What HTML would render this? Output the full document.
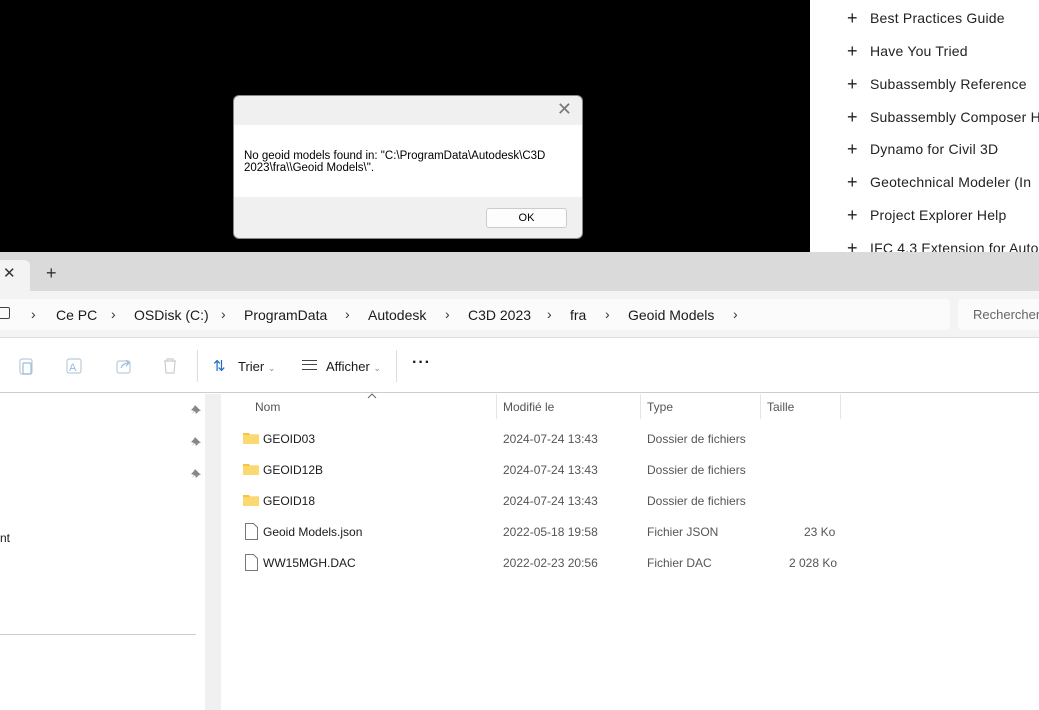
<!DOCTYPE html>
<html><head><style>
*{margin:0;padding:0;box-sizing:border-box}
body{width:1039px;height:710px;overflow:hidden;position:relative;background:#fff;font-family:"Liberation Sans",sans-serif;font-size:12px;color:#1a1a1a}
.abs{position:absolute}
.help div{position:absolute;left:60px;font-size:14px;color:#222;white-space:nowrap;letter-spacing:.2px}
.help span{position:absolute;left:-23px;top:-2px;font-size:18px;color:#222}
.crumb{position:absolute;top:307px;font-size:14px;color:#1a1a1a;white-space:nowrap}
.chev{position:absolute;top:306px;font-size:14px;color:#333}
.row{position:absolute;left:0;width:1039px;height:31px;font-size:12px}
.row span{position:absolute;top:9px;white-space:nowrap}
.pin{position:absolute;left:190px}
</style></head><body>
<div class="abs" style="left:0;top:0;width:810px;height:252px;background:#000"></div>
<div class="abs help" style="left:810px;top:0;width:229px;height:252px;background:#fff;overflow:hidden">
<div style="top:10px"><span>+</span>Best Practices Guide</div>
<div style="top:43px"><span>+</span>Have You Tried</div>
<div style="top:76px"><span>+</span>Subassembly Reference</div>
<div style="top:109px"><span>+</span>Subassembly Composer H</div>
<div style="top:141px"><span>+</span>Dynamo for Civil 3D</div>
<div style="top:174px"><span>+</span>Geotechnical Modeler (In</div>
<div style="top:207px"><span>+</span>Project Explorer Help</div>
<div style="top:240px"><span>+</span>IFC 4.3 Extension for Auto</div>
</div>
<!-- dialog -->
<div class="abs" style="left:233px;top:95px;width:350px;height:144px;background:#f0f0f0;border:1px solid #888;border-radius:6px;overflow:hidden">
<div class="abs" style="right:10px;top:3px;font-size:18px;color:#777">✕</div>
<div class="abs" style="left:0;top:29px;width:350px;height:72px;background:#fff"></div>
<div class="abs" style="left:10px;top:54px;font-size:11.5px;line-height:12px;color:#000;white-space:nowrap">No geoid models found in: "C:\ProgramData\Autodesk\C3D<br>2023\fra\\Geoid Models\".</div>
<div class="abs" style="left:252px;top:112px;width:81px;height:20px;background:#fdfdfd;border:1px solid #ccc;border-radius:3px;text-align:center;line-height:18px;font-size:11px;color:#000">OK</div>
</div>
<!-- explorer -->
<div class="abs" style="left:0;top:252px;width:1039px;height:40px;background:#dadada"></div>
<div class="abs" style="left:0;top:260px;width:30px;height:32px;background:#f3f3f3;border-radius:0 6px 0 0"></div>
<div class="abs" style="left:3px;top:264px;font-size:15px;color:#333">✕</div>
<div class="abs" style="left:46px;top:263px;font-size:18px;color:#333">+</div>
<div class="abs" style="left:0;top:291px;width:1039px;height:47px;background:#f3f3f3;border-bottom:1px solid #ddd"></div>
<div class="abs" style="left:0;top:299px;width:950px;height:31px;background:#fbfbfb;border-radius:0 4px 4px 0"></div>
<div class="abs" style="left:958px;top:299px;width:90px;height:31px;background:#fbfbfb;border-radius:4px"></div>
<div class="abs" style="left:973px;top:307px;font-size:13px;color:#666">Rechercher</div>
<div class="abs" style="left:-4px;top:307px;width:14px;height:12px;border:1.5px solid #444;border-radius:2px"></div>
<div class="chev" style="left:31px">›</div><div class="crumb" style="left:56px">Ce PC</div>
<div class="chev" style="left:111px">›</div><div class="crumb" style="left:134px">OSDisk (C:)</div>
<div class="chev" style="left:221px">›</div><div class="crumb" style="left:244px">ProgramData</div>
<div class="chev" style="left:345px">›</div><div class="crumb" style="left:368px">Autodesk</div>
<div class="chev" style="left:445px">›</div><div class="crumb" style="left:468px">C3D 2023</div>
<div class="chev" style="left:547px">›</div><div class="crumb" style="left:570px">fra</div>
<div class="chev" style="left:605px">›</div><div class="crumb" style="left:628px">Geoid Models</div>
<div class="chev" style="left:733px">›</div>
<!-- toolbar -->
<div class="abs" style="left:0;top:339px;width:1039px;height:54px;background:#fff;border-bottom:1px solid #ccc"></div>
<svg class="abs" style="left:18px;top:356px" width="165" height="20" fill="none" stroke-width="1.2">
<rect x="2" y="3" width="12" height="15" rx="2" stroke="#bcd"/><rect x="5" y="7" width="8" height="11" rx="1" stroke="#9bd"/>
<rect x="49" y="3" width="14" height="14" rx="2" stroke="#bcd"/><text x="51" y="15" font-size="11" fill="#9bd" stroke="none" font-family="Liberation Sans">A</text>
<rect x="99" y="5" width="13" height="12" rx="2" stroke="#bcd"/><path d="M103 12 q2-5 8-5 M108 4 l3 3 -3 3" stroke="#9bd"/>
<path d="M146 5h12 M149 5v-2h6v2 M147 5l1 12h8l1-12" stroke="#ccc"/>
</svg>
<div class="abs" style="left:197px;top:350px;width:1px;height:32px;background:#ddd"></div>
<div class="abs" style="left:213px;top:357px;font-size:15px;color:#1f6fc5">⇅</div>
<div class="abs" style="left:238px;top:359px;font-size:13px">Trier <span style="font-size:9px;color:#888">⌄</span></div>
<div class="abs" style="left:302px;top:360px;width:15px;height:10px;border-top:1px solid #444;border-bottom:1px solid #444"></div>
<div class="abs" style="left:302px;top:364px;width:15px;height:1px;background:#444"></div>
<div class="abs" style="left:326px;top:359px;font-size:13px">Afficher <span style="font-size:9px;color:#888">⌄</span></div>
<div class="abs" style="left:396px;top:350px;width:1px;height:32px;background:#ddd"></div>
<div class="abs" style="left:412px;top:354px;font-size:16px;font-weight:bold;letter-spacing:1px">···</div>
<!-- nav pane -->
<svg class="pin" style="top:404px" width="12" height="12"><path d="M5 1l6 6-2 0-3 3-1-3-3 3 2-3-3-1 3-3z" fill="#888"/></svg>
<svg class="pin" style="top:436px" width="12" height="12"><path d="M5 1l6 6-2 0-3 3-1-3-3 3 2-3-3-1 3-3z" fill="#888"/></svg>
<svg class="pin" style="top:468px" width="12" height="12"><path d="M5 1l6 6-2 0-3 3-1-3-3 3 2-3-3-1 3-3z" fill="#888"/></svg>
<div class="abs" style="left:0;top:531px;font-size:12px">nt</div>
<div class="abs" style="left:0;top:634px;width:196px;height:1px;background:#ccc"></div>
<div class="abs" style="left:205px;top:394px;width:16px;height:316px;background:#f0f0f0"></div>
<!-- headers -->
<div class="abs" style="left:255px;top:400px;font-size:12px;color:#555">Nom</div>
<svg class="abs" style="left:367px;top:393px" width="10" height="6"><path d="M1 5l4-4 4 4" stroke="#666" fill="none"/></svg>
<div class="abs" style="left:496px;top:394px;width:1px;height:25px;background:#e5e5e5"></div>
<div class="abs" style="left:503px;top:400px;color:#555">Modifié le</div>
<div class="abs" style="left:640px;top:394px;width:1px;height:25px;background:#e5e5e5"></div>
<div class="abs" style="left:647px;top:400px;color:#555">Type</div>
<div class="abs" style="left:760px;top:394px;width:1px;height:25px;background:#e5e5e5"></div>
<div class="abs" style="left:767px;top:400px;color:#555">Taille</div>
<div class="abs" style="left:840px;top:394px;width:1px;height:25px;background:#e5e5e5"></div>
<!-- rows -->
<div class="row" style="top:423px"><svg class="abs" style="left:243px;top:8px" width="16" height="13"><path d="M0 2h6l1 1.5h9V13H0z" fill="#f8c440"/><rect x="0" y="4" width="16" height="9" fill="#fbd870"/></svg><span style="left:263px">GEOID03</span><span style="left:503px;color:#555">2024-07-24 13:43</span><span style="left:647px;color:#555">Dossier de fichiers</span></div>
<div class="row" style="top:454px"><svg class="abs" style="left:243px;top:8px" width="16" height="13"><path d="M0 2h6l1 1.5h9V13H0z" fill="#f8c440"/><rect x="0" y="4" width="16" height="9" fill="#fbd870"/></svg><span style="left:263px">GEOID12B</span><span style="left:503px;color:#555">2024-07-24 13:43</span><span style="left:647px;color:#555">Dossier de fichiers</span></div>
<div class="row" style="top:485px"><svg class="abs" style="left:243px;top:8px" width="16" height="13"><path d="M0 2h6l1 1.5h9V13H0z" fill="#f8c440"/><rect x="0" y="4" width="16" height="9" fill="#fbd870"/></svg><span style="left:263px">GEOID18</span><span style="left:503px;color:#555">2024-07-24 13:43</span><span style="left:647px;color:#555">Dossier de fichiers</span></div>
<div class="row" style="top:516px"><svg class="abs" style="left:245px;top:7px" width="13" height="17"><path d="M.5 .5h8l4 4v12H.5z" fill="#fff" stroke="#777"/></svg><span style="left:263px">Geoid Models.json</span><span style="left:503px;color:#555">2022-05-18 19:58</span><span style="left:647px;color:#555">Fichier JSON</span><span style="left:804px;color:#555">23 Ko</span></div>
<div class="row" style="top:547px"><svg class="abs" style="left:245px;top:7px" width="13" height="17"><path d="M.5 .5h8l4 4v12H.5z" fill="#fff" stroke="#777"/></svg><span style="left:263px">WW15MGH.DAC</span><span style="left:503px;color:#555">2022-02-23 20:56</span><span style="left:647px;color:#555">Fichier DAC</span><span style="left:789px;color:#555">2 028 Ko</span></div>
</body></html>
